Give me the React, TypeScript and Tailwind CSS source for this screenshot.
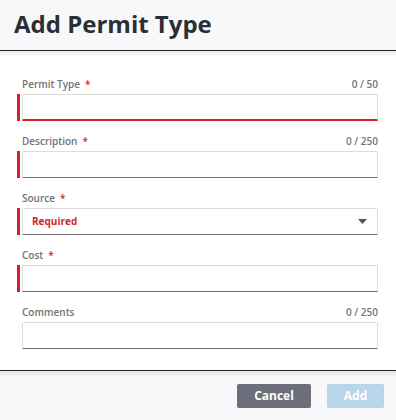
const fields = [
  { label: "Permit Type", required: true, counter: "0 / 50", kind: "input", active: true },
  { label: "Description", required: true, counter: "0 / 250", kind: "input" },
  { label: "Source", required: true, kind: "select" },
  { label: "Cost", required: true, kind: "input" },
  { label: "Comments", required: false, counter: "0 / 250", kind: "input" },
]

export default function App() {
  return (
    <div className="flex h-[420px] w-[396px] flex-col bg-white font-['Open_Sans',sans-serif]">
      <div className="h-[51px] shrink-0 border-b border-[#212529] bg-[#f8f8fa] px-[14px] pt-[9px]">
        <h1 className="text-[24px] font-bold leading-[30px] text-[#2b2f33]">Add Permit Type</h1>
      </div>
      <div className="flex flex-1 flex-col gap-[13px] bg-white bg-gradient-to-b from-[#ececec] to-white bg-[length:100%_6px] bg-no-repeat pl-[17px] pr-[18px] pt-[26px]">
        {fields.map((f) => (
          <div key={f.label} className="flex flex-col">
            <div className="flex items-center justify-between pl-[5px] text-[10px] font-semibold leading-[14px] text-[#737373]">
              <span>
                {f.label}
                {f.required && <span className="ml-[5px] text-[#d71f2a]">*</span>}
              </span>
              {f.counter && <span>{f.counter}</span>}
            </div>
            <div className="mt-[3px] flex h-[27px]">
              <div className={f.required ? "w-[3px] bg-[#d71f2a]" : "w-[3px]"} />
              <div
                className={
                  "ml-[2px] flex flex-1 items-center rounded-t-[2px] border border-[#dcdcdc] " +
                  (f.active ? "border-b-2 border-b-[#d71f2a]" : "border-b-[#6e6e6e]")
                }
              >
                {f.kind === "select" && (
                  <>
                    <span className="flex-1 pl-[9px] text-[10px] font-bold text-[#d71f2a]">Required</span>
                    <svg width="9" height="5" viewBox="0 0 9 5" className="mr-[10px]">
                      <path d="M0 0h9L4.5 5z" fill="#555" />
                    </svg>
                  </>
                )}
              </div>
            </div>
          </div>
        ))}
      </div>
      <div className="flex h-[50px] shrink-0 items-start justify-end gap-[16px] border-t border-[#212529] bg-[#f8f8fa] bg-gradient-to-b from-[#e6e6e8] to-[#f8f8fa] bg-[length:100%_6px] bg-no-repeat pr-[12px] pt-[13px]">
        <button className="h-[24px] w-[74px] rounded-[2px] bg-[#6c6f7a] text-[12px] font-bold text-white">Cancel</button>
        <button className="h-[24px] w-[57px] rounded-[2px] bg-[#b9d5ec] text-[12px] font-bold text-white">Add</button>
      </div>
    </div>
  )
}
